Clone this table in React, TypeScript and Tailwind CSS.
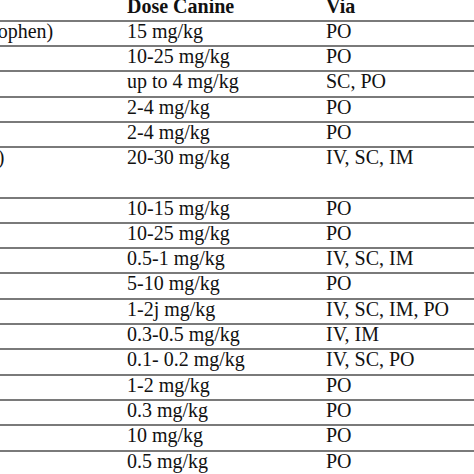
const rows = [
  { drug: "Paracetamol (acetaminophen)", dose: "15 mg/kg", via: "PO", h: "h-[25px]" },
  { drug: "Aspirin", dose: "10-25 mg/kg", via: "PO", h: "h-[25px]" },
  { drug: "Carprofen", dose: "up to 4 mg/kg", via: "SC, PO", h: "h-[26px]" },
  { drug: "Ketoprofen", dose: "2-4 mg/kg", via: "PO", h: "h-[25px]" },
  { drug: "Firocoxib", dose: "2-4 mg/kg", via: "PO", h: "h-[25px]" },
  { drug: "Dipyrone (Metamizole)", dose: "20-30 mg/kg", via: "IV, SC, IM", h: "h-[51px]" },
  { drug: "Gabapentin", dose: "10-15 mg/kg", via: "PO", h: "h-[25px]" },
  { drug: "Aspirin", dose: "10-25 mg/kg", via: "PO", h: "h-[25px]" },
  { drug: "Ketamine", dose: "0.5-1 mg/kg", via: "IV, SC, IM", h: "h-[25px]" },
  { drug: "Tramadol", dose: "5-10 mg/kg", via: "PO", h: "h-[26px]" },
  { drug: "Tramadol", dose: "1-2j mg/kg", via: "IV, SC, IM, PO", h: "h-[25px]" },
  { drug: "Morphine", dose: "0.3-0.5 mg/kg", via: "IV, IM", h: "h-[25px]" },
  { drug: "Meloxicam", dose: "0.1- 0.2 mg/kg", via: "IV, SC, PO", h: "h-[26px]" },
  { drug: "Codeine", dose: "1-2 mg/kg", via: "PO", h: "h-[25px]" },
  { drug: "Amitriptyline", dose: "0.3 mg/kg", via: "PO", h: "h-[25px]" },
  { drug: "Amantadine", dose: "10 mg/kg", via: "PO", h: "h-[26px]" },
  { drug: "Prednisolone", dose: "0.5 mg/kg", via: "PO", h: "h-[30px]" },
];

export default function App() {
  return (
    <div className="w-[474px] h-[474px] overflow-hidden bg-white text-[20px] text-[#111] font-['Liberation_Serif','Times_New_Roman',serif]">
      <div className="-ml-[185px] w-[659px]">
        <div className="grid grid-cols-[312px_199px_1fr] h-[20px] leading-[12px] font-bold">
          <div>Drug</div>
          <div>Dose Canine</div>
          <div>Via</div>
        </div>
        {rows.map((r, i) => (
          <div
            key={i}
            className={`grid grid-cols-[312px_199px_1fr] border-t-2 border-[#7a7a7a] leading-[19px] whitespace-nowrap ${r.h}`}
          >
            <div>{r.drug}</div>
            <div>{r.dose}</div>
            <div>{r.via}</div>
          </div>
        ))}
      </div>
    </div>
  );
}
